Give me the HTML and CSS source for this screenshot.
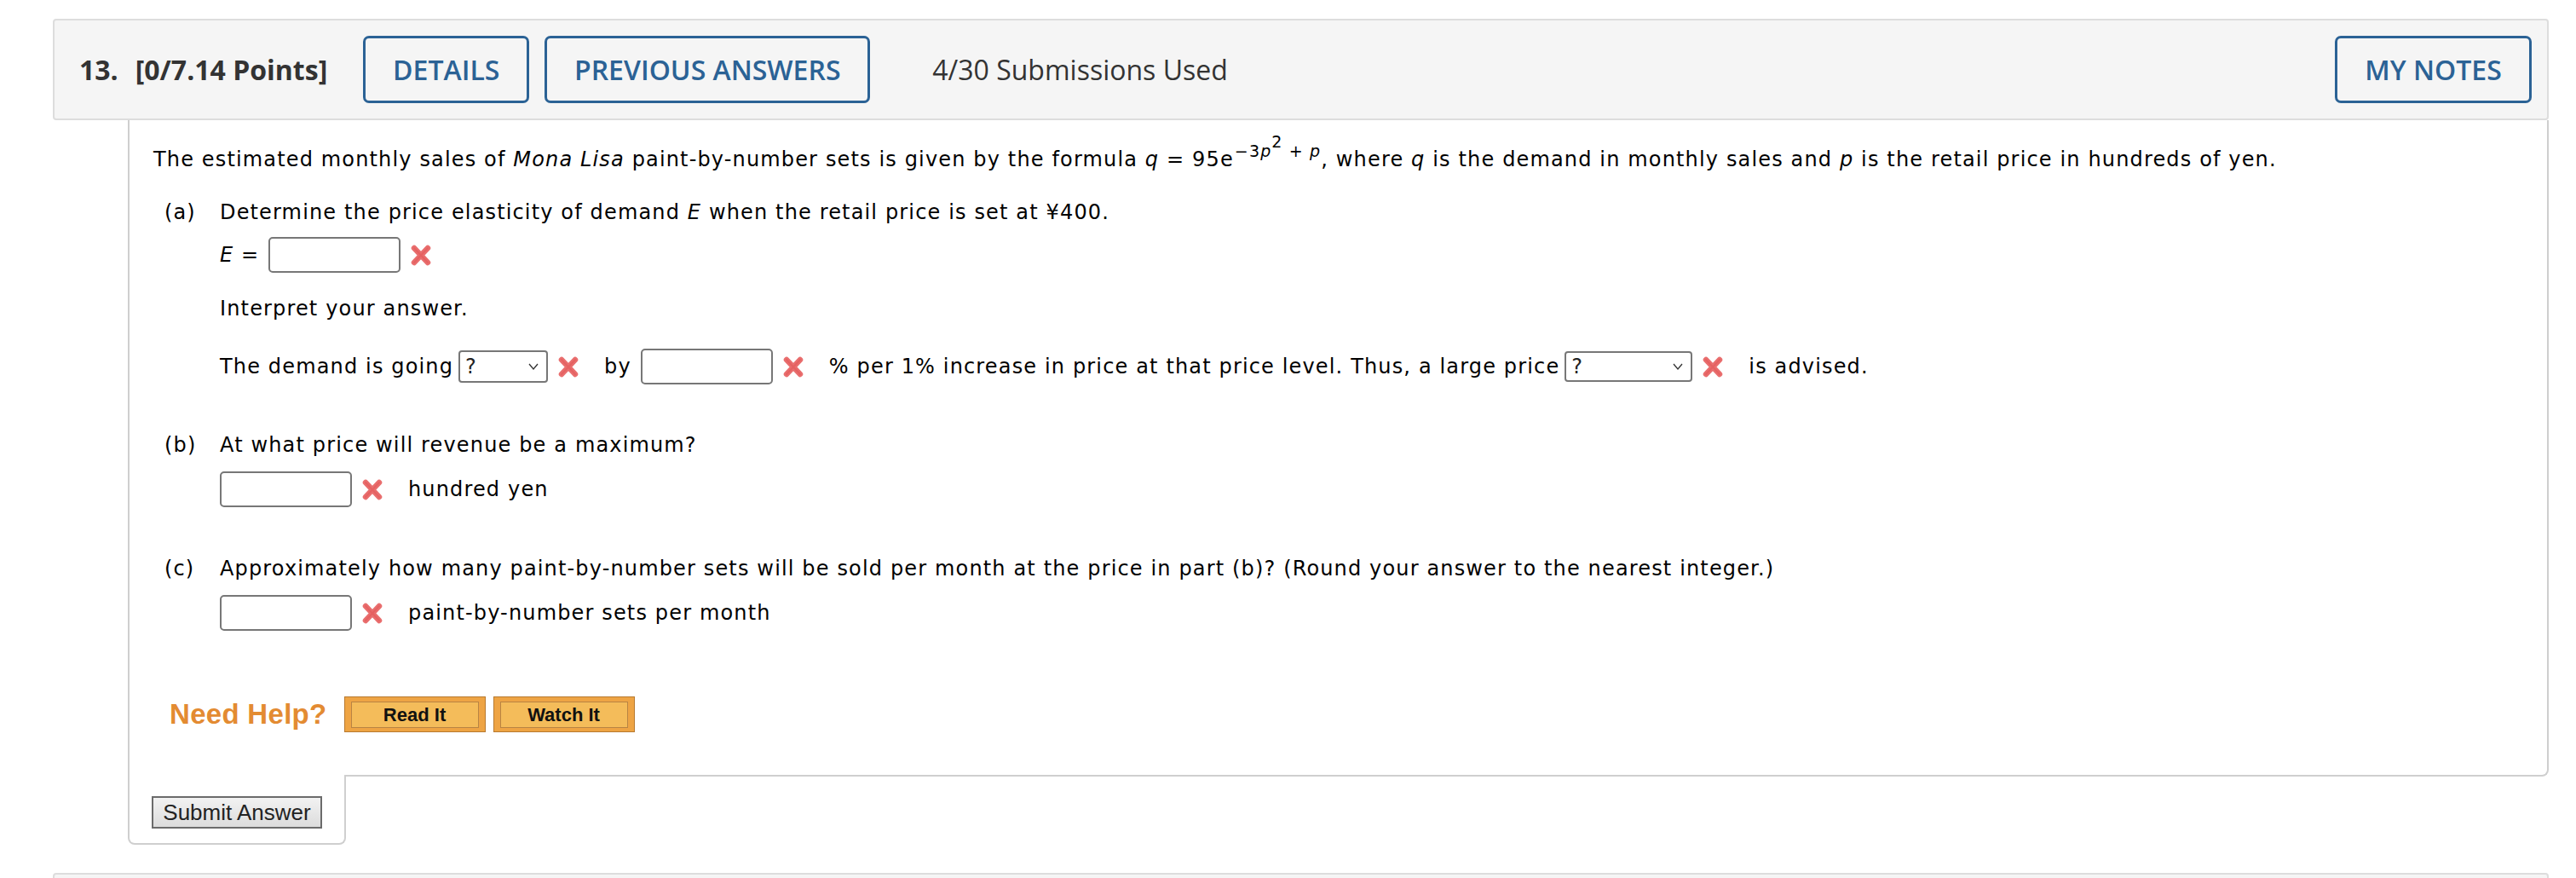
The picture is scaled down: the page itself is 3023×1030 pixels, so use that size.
FILE: index.html
```html
<!DOCTYPE html>
<html lang="en">
<head>
<meta charset="utf-8">
<title>Question 13</title>
<link rel="stylesheet" href="styles.css">
</head>
<body>
<div class="page">
  <div class="qhead">
    <div class="qtitle"><span class="qnum">13.</span>[0/7.14 Points]</div>
    <button class="hbtn details">DETAILS</button>
    <button class="hbtn prev">PREVIOUS ANSWERS</button>
    <div class="subs">4/30 Submissions Used</div>
    <button class="hbtn notes">MY NOTES</button>
  </div>

  <div class="qbody">
    <p class="intro">The estimated monthly sales of <i>Mona Lisa</i> paint-by-number sets is given by the formula <i>q</i> = 95e<sup class="s1">−3<i>p</i><sup class="s2">2</sup> + <i>p</i></sup>, where <i>q</i> is the demand in monthly sales and <i>p</i> is the retail price in hundreds of yen.</p>

    <div class="part pa">
      <span class="lbl">(a)</span>
      <div class="pc">
        <div class="ptext">Determine the price elasticity of demand <i>E</i> when the retail price is set at ¥400.</div>
        <div class="arow r-e">
          <span class="elabel"><i>E</i> =</span>
          <span class="ans"></span>
          <svg class="bad" viewBox="0 0 26 27" width="26" height="27"><path d="M5 5 L21 22 M21 5 L5 22" stroke="#e96e6e" stroke-width="6.5" stroke-linecap="round" fill="none"/><path d="M5 5 L21 22 M21 5 L5 22" stroke="#e05252" stroke-width="2" stroke-linecap="round" fill="none" opacity=".45"/></svg>
        </div>
        <div class="ptext interp">Interpret your answer.</div>
        <div class="arow r-demand">
          <span class="t">The demand is going</span>
          <span class="sel sel1">?<svg class="chev" viewBox="0 0 12 8" width="12" height="8"><path d="M1 1 L6 7 L11 1" stroke="#333" stroke-width="1.3" fill="none"/></svg></span>
          <svg class="bad" viewBox="0 0 26 27" width="26" height="27"><path d="M5 5 L21 22 M21 5 L5 22" stroke="#e96e6e" stroke-width="6.5" stroke-linecap="round" fill="none"/><path d="M5 5 L21 22 M21 5 L5 22" stroke="#e05252" stroke-width="2" stroke-linecap="round" fill="none" opacity=".45"/></svg>
          <span class="t after">by</span>
          <span class="ans ans-by"></span>
          <svg class="bad" viewBox="0 0 26 27" width="26" height="27"><path d="M5 5 L21 22 M21 5 L5 22" stroke="#e96e6e" stroke-width="6.5" stroke-linecap="round" fill="none"/><path d="M5 5 L21 22 M21 5 L5 22" stroke="#e05252" stroke-width="2" stroke-linecap="round" fill="none" opacity=".45"/></svg>
          <span class="t after">% per 1% increase in price at that price level. Thus, a large price</span>
          <span class="sel sel2">?<svg class="chev" viewBox="0 0 12 8" width="12" height="8"><path d="M1 1 L6 7 L11 1" stroke="#333" stroke-width="1.3" fill="none"/></svg></span>
          <svg class="bad" viewBox="0 0 26 27" width="26" height="27"><path d="M5 5 L21 22 M21 5 L5 22" stroke="#e96e6e" stroke-width="6.5" stroke-linecap="round" fill="none"/><path d="M5 5 L21 22 M21 5 L5 22" stroke="#e05252" stroke-width="2" stroke-linecap="round" fill="none" opacity=".45"/></svg>
          <span class="t after">is advised.</span>
        </div>
      </div>
    </div>

    <div class="part pb">
      <span class="lbl">(b)</span>
      <div class="pc">
        <div class="ptext">At what price will revenue be a maximum?</div>
        <div class="arow r-unit">
          <span class="ans"></span>
          <svg class="bad" viewBox="0 0 26 27" width="26" height="27"><path d="M5 5 L21 22 M21 5 L5 22" stroke="#e96e6e" stroke-width="6.5" stroke-linecap="round" fill="none"/><path d="M5 5 L21 22 M21 5 L5 22" stroke="#e05252" stroke-width="2" stroke-linecap="round" fill="none" opacity=".45"/></svg>
          <span class="t after">hundred yen</span>
        </div>
      </div>
    </div>

    <div class="part pcx">
      <span class="lbl">(c)</span>
      <div class="pc">
        <div class="ptext">Approximately how many paint-by-number sets will be sold per month at the price in part (b)? (Round your answer to the nearest integer.)</div>
        <div class="arow r-unit">
          <span class="ans"></span>
          <svg class="bad" viewBox="0 0 26 27" width="26" height="27"><path d="M5 5 L21 22 M21 5 L5 22" stroke="#e96e6e" stroke-width="6.5" stroke-linecap="round" fill="none"/><path d="M5 5 L21 22 M21 5 L5 22" stroke="#e05252" stroke-width="2" stroke-linecap="round" fill="none" opacity=".45"/></svg>
          <span class="t after">paint-by-number sets per month</span>
        </div>
      </div>
    </div>

    <div class="help">
      <span class="needhelp">Need Help?</span>
      <span class="hb"><span class="hbi">Read It</span></span>
      <span class="hb"><span class="hbi">Watch It</span></span>
    </div>
  </div>

  <div class="tab"><button class="submit">Submit Answer</button></div>

  <div class="qhead nexthead"></div>
</div>
</body>
</html>
```

FILE: styles.css
```css
html, body {
  margin: 0;
  padding: 0;
  background: #ffffff;
  overflow: hidden;
}

.page {
  padding: 22px 32px 0 62px;
}

/* ---------- header bar ---------- */
.qhead {
  height: 119px;
  box-sizing: border-box;
  background: #f5f5f5;
  border: 2px solid #dddddd;
  border-radius: 4px;
  display: flex;
  align-items: center;
  padding: 0 18px 0 29px;
  font-family: "Open Sans", "Noto Sans", sans-serif;
  font-size: 32px;
  color: #333333;
}

.qtitle {
  font-weight: 700;
  margin-right: 42px;
  white-space: nowrap;
}

.qnum {
  margin-right: 20px;
}

.hbtn {
  height: 79px;
  box-sizing: border-box;
  border: 3px solid #2b6295;
  border-radius: 7px;
  background: transparent;
  color: #2b6295;
  font-family: "Open Sans", "Noto Sans", sans-serif;
  font-weight: 600;
  font-size: 32px;
  padding: 0;
  text-align: center;
}

.details { width: 195px; }
.prev { width: 382px; margin-left: 18px; }
.notes { width: 231px; margin-left: auto; }

.subs {
  margin-left: 73px;
  white-space: nowrap;
}

/* ---------- question body ---------- */
.qbody {
  margin-left: 88px;
  border: 2px solid #cfcfcf;
  border-top: none;
  border-radius: 0 0 8px 0;
  padding: 25px 28px 50px 28px;
  font-family: "DejaVu Sans", Verdana, sans-serif;
  font-size: 24px;
  line-height: 28px;
  letter-spacing: 1.15px;
  color: #000000;
}

.intro {
  margin: 0;
  height: 28px;
  white-space: nowrap;
}

.s1 {
  font-size: 19px;
  line-height: 0;
  vertical-align: 11px;
  margin-left: 1px;
}

.s2 {
  font-size: 19px;
  line-height: 0;
  vertical-align: 11px;
}

.part {
  display: flex;
  margin-left: 13px;
}

.lbl {
  width: 65px;
  flex: none;
  height: 28px;
}

.pc {
  flex: 1;
}

.pa { margin-top: 41px; }
.pb { margin-top: 57px; }
.pcx { margin-top: 58px; }

.ptext {
  height: 28px;
  white-space: nowrap;
}

.interp {
  margin-top: 28px;
}

.arow {
  display: flex;
  align-items: center;
  height: 42px;
  white-space: nowrap;
}

.r-e { margin-top: 15px; }
.r-demand { margin-top: 33px; }
.r-unit { margin-top: 17px; }

.elabel {
  margin-right: 11px;
}

.ans {
  display: inline-block;
  width: 155px;
  height: 42px;
  box-sizing: border-box;
  border: 2px solid #777777;
  border-radius: 5px;
  background: #ffffff;
  flex: none;
}

.ans-by {
  margin-left: 11px;
}

.bad {
  flex: none;
  margin-left: 11px;
}

.t.after {
  margin-left: 29px;
}

.sel {
  display: inline-flex;
  align-items: center;
  justify-content: space-between;
  box-sizing: border-box;
  border: 2px solid #777777;
  border-radius: 4px;
  background: #ffffff;
  padding: 0 9px 0 6px;
  flex: none;
  font-size: 24px;
  color: #222222;
  letter-spacing: 0;
}

.sel1 {
  width: 105px;
  height: 38px;
  margin-left: 6px;
}

.sel2 {
  width: 150px;
  height: 36px;
  margin-left: 6px;
}

.chev {
  display: block;
}

/* ---------- help row ---------- */
.help {
  margin-top: 77px;
  height: 42px;
  display: flex;
  align-items: center;
  padding-left: 19px;
  letter-spacing: 0;
}

.needhelp {
  font-family: "Liberation Sans", Arial, sans-serif;
  font-weight: 700;
  font-size: 33px;
  color: #e38b32;
  margin-right: 20px;
  letter-spacing: 0.3px;
}

.hb {
  width: 166px;
  height: 42px;
  box-sizing: border-box;
  border: 1px solid #b87a30;
  background: #eea444;
  padding: 5px 7px 4px 7px;
  display: flex;
  margin-right: 9px;
}

.hbi {
  flex: 1;
  border: 1px solid #b98443;
  background: #f4bc5a;
  display: flex;
  align-items: center;
  justify-content: center;
  font-family: "Liberation Sans", Arial, sans-serif;
  font-weight: 700;
  font-size: 22px;
  color: #111111;
}

/* ---------- submit tab ---------- */
.tab {
  margin-left: 88px;
  margin-top: -2px;
  width: 256px;
  height: 82px;
  box-sizing: border-box;
  border: 2px solid #cfcfcf;
  border-top: none;
  border-radius: 0 0 8px 8px;
  background: #ffffff;
  padding: 25px 0 0 26px;
}

.submit {
  width: 200px;
  height: 38px;
  box-sizing: border-box;
  border: 2px solid #6b6b6b;
  background: linear-gradient(#f2f2f2, #dcdcdc);
  font-family: "Liberation Sans", Arial, sans-serif;
  font-size: 26px;
  color: #222222;
  padding: 0;
}

.nexthead {
  margin-top: 33px;
}
```
